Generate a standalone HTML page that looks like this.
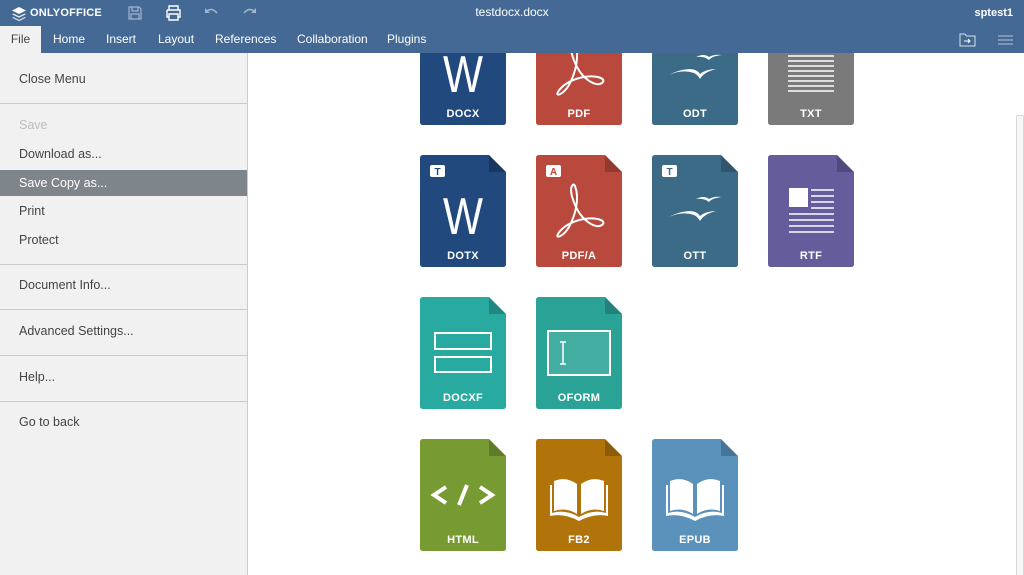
<!DOCTYPE html>
<html><head><meta charset="utf-8"><style>
*{margin:0;padding:0;box-sizing:border-box}
body{width:1024px;height:575px;overflow:hidden;font-family:"Liberation Sans",sans-serif;background:#fff;position:relative}
#hdr{position:absolute;left:0;top:0;width:1024px;height:53px;background:#446995;color:#fff}
.tab{position:absolute;top:26px;height:27px;line-height:26px;font-size:12px;color:#fff}
#menu{position:absolute;left:0;top:53px;width:248px;height:522px;background:#f1f1f1;border-right:1px solid #cbcbcb}
.mi{position:absolute;left:19px;font-size:12.5px;color:#444}
.dv{position:absolute;left:0;width:247px;height:1px;background:#cbcbcb}
#content{position:absolute;left:248px;top:53px;width:776px;height:522px;overflow:hidden}
.ic{position:absolute;width:86px;height:112px}
.ic svg{display:block}
.lb{font:bold 11px "Liberation Sans",sans-serif;fill:#fff;text-anchor:middle;letter-spacing:.3px}
</style></head><body>
<svg width="0" height="0" style="position:absolute">
<defs>
<path id="pg" d="M3,0H69L86,17V109Q86,112 83,112H3Q0,112 0,109V3Q0,0 3,0Z"/>
<path id="fd" d="M69,0L86,17H69Z"/>
<g id="book" fill="#fff"><path d="M18,42Q30,37 41,45V75Q30,68 18,72Z"/><path d="M68,42Q56,37 45,45V75Q56,68 68,72Z"/><path d="M14,46h2v28q13,-4 27,4q14,-8 27,-4v-28h2v31q-14,-3 -29,5q-15,-8 -29,-5Z"/></g>
<g id="birds" fill="#fff"><path d="M17,62Q30,56 42,60Q46,62 48,66Q52,59 64,56Q54,56 48,61Q44,54 30,57Q22,59 17,62Z"/><path d="M44,44Q52,43 57,47Q60,43 70,42Q62,41 57,44Q52,40 44,44Z"/></g>
<path id="acro" fill="none" stroke="#fff" stroke-width="2" d="M36,31C33,36 38,50 44,59C50,67 60,74 66,70C71,66 62,62 48,64C36,66 26,72 22,79C19,84 27,82 33,72C39,61 44,44 39,31C38,29 37,29 36,31Z"/>
</defs></svg>

<div id="hdr">
 <svg style="position:absolute;left:11px;top:6px" width="16" height="16" viewBox="0 0 16 16"><path d="M8,1L15,4.5L8,8L1,4.5Z" fill="#fff"/><path d="M2.5,7.5L8,10.3L13.5,7.5L15,8.3L8,11.8L1,8.3Z" fill="#fff" opacity=".85"/><path d="M2.5,11L8,13.8L13.5,11L15,11.8L8,15.3L1,11.8Z" fill="#fff" opacity=".7"/></svg>
 <div style="position:absolute;left:30px;top:7px;font-size:11px;font-weight:bold;letter-spacing:.2px">ONLYOFFICE</div>
 <svg style="position:absolute;left:128px;top:6px" width="14" height="14" viewBox="0 0 14 14" opacity=".5"><path d="M1,1H11L13,3V13H1Z M4,1V5H10V1 M3,8H11V13H3Z" fill="none" stroke="#fff" stroke-width="1.2"/></svg>
 <svg style="position:absolute;left:165px;top:5px" width="17" height="16" viewBox="0 0 17 16"><path d="M4,5V1H13V5 M2,5H15V12H13 M4,12H2V5 M4,9H13V15H4Z" fill="none" stroke="#fff" stroke-width="1.4"/></svg>
 <svg style="position:absolute;left:204px;top:7px" width="14" height="10" viewBox="0 0 14 10" opacity=".5"><path d="M3,4Q8,0 13,6" fill="none" stroke="#fff" stroke-width="1.5"/><path d="M1,1V6H6Z" fill="#fff"/></svg>
 <svg style="position:absolute;left:243px;top:7px" width="14" height="10" viewBox="0 0 14 10" opacity=".5"><path d="M11,4Q6,0 1,6" fill="none" stroke="#fff" stroke-width="1.5"/><path d="M13,1V6H8Z" fill="#fff"/></svg>
 <div style="position:absolute;left:0;width:1024px;top:5px;text-align:center;font-size:12px">testdocx.docx</div>
 <div style="position:absolute;right:11px;top:7px;font-size:11px;font-weight:bold">sptest1</div>
 <div class="tab" style="left:0;width:41px;background:#f1f1f1;color:#444;text-align:center">File</div>
 <div class="tab" style="left:53px">Home</div>
 <div class="tab" style="left:106px">Insert</div>
 <div class="tab" style="left:158px">Layout</div>
 <div class="tab" style="left:215px">References</div>
 <div class="tab" style="left:297px">Collaboration</div>
 <div class="tab" style="left:387px">Plugins</div>
 <svg style="position:absolute;left:959px;top:33px" width="17" height="14" viewBox="0 0 17 14"><path d="M1,1H6L7.5,3H16V13H1Z" fill="none" stroke="#fff" stroke-width="1" opacity=".8"/><path d="M5,8H11M9,6L11,8L9,10" fill="none" stroke="#fff" stroke-width="1"/></svg>
 <svg style="position:absolute;left:998px;top:35px" width="15" height="10" viewBox="0 0 15 10" opacity=".6"><path d="M0,1H15M0,5H15M0,9H15" stroke="#fff" stroke-width="1"/></svg>
</div>

<div id="menu">
 <div class="mi" style="top:19px">Close Menu</div>
 <div class="dv" style="top:50px"></div>
 <div class="mi" style="top:65px;color:#bdbdbd">Save</div>
 <div class="mi" style="top:94px">Download as...</div>
 <div style="position:absolute;left:0;top:117px;width:247px;height:26px;background:#7e858b"></div>
 <div class="mi" style="top:123px;color:#fff">Save Copy as...</div>
 <div class="mi" style="top:151px">Print</div>
 <div class="mi" style="top:180px">Protect</div>
 <div class="dv" style="top:211px"></div>
 <div class="mi" style="top:225px">Document Info...</div>
 <div class="dv" style="top:256px"></div>
 <div class="mi" style="top:271px">Advanced Settings...</div>
 <div class="dv" style="top:302px"></div>
 <div class="mi" style="top:317px">Help...</div>
 <div class="dv" style="top:348px"></div>
 <div class="mi" style="top:362px">Go to back</div>
</div>

<div id="content">
 <div class="ic" style="left:172px;top:-40px"><svg width="86" height="112"><use href="#pg" fill="#22497e"/><use href="#fd" fill="#000" opacity=".25"/><text x="23" y="79" font-size="52" fill="#fff" textLength="40" lengthAdjust="spacingAndGlyphs" font-family="Liberation Sans">W</text><text class="lb" x="43" y="104">DOCX</text></svg></div>
 <div class="ic" style="left:288px;top:-40px"><svg width="86" height="112"><use href="#pg" fill="#b8493c"/><use href="#fd" fill="#000" opacity=".2"/><use href="#acro"/><text class="lb" x="43" y="104">PDF</text></svg></div>
 <div class="ic" style="left:404px;top:-40px"><svg width="86" height="112"><use href="#pg" fill="#3c6b87"/><use href="#fd" fill="#000" opacity=".2"/><use href="#birds"/><text class="lb" x="43" y="104">ODT</text></svg></div>
 <div class="ic" style="left:520px;top:-40px"><svg width="86" height="112"><use href="#pg" fill="#7a7a7a"/><use href="#fd" fill="#000" opacity=".2"/><path d="M20,43H66M20,48H66M20,53H66M20,58H66M20,63H66M20,68H66M20,73H66M20,78H66" stroke="#fff" stroke-width="1.6"/><text class="lb" x="43" y="104">TXT</text></svg></div>
 <div class="ic" style="left:172px;top:102px"><svg width="86" height="112"><use href="#pg" fill="#22497e"/><use href="#fd" fill="#000" opacity=".25"/><rect x="10" y="10" width="15" height="12" rx="2" fill="#fff"/><text x="17.5" y="20" font-size="10" font-weight="bold" fill="#22497e" text-anchor="middle">T</text><text x="23" y="79" font-size="52" fill="#fff" textLength="40" lengthAdjust="spacingAndGlyphs" font-family="Liberation Sans">W</text><text class="lb" x="43" y="104">DOTX</text></svg></div>
 <div class="ic" style="left:288px;top:102px"><svg width="86" height="112"><use href="#pg" fill="#b8493c"/><use href="#fd" fill="#000" opacity=".2"/><rect x="10" y="10" width="15" height="12" rx="2" fill="#fff"/><text x="17.5" y="20" font-size="10" font-weight="bold" fill="#b8493c" text-anchor="middle">A</text><use href="#acro"/><text class="lb" x="43" y="104">PDF/A</text></svg></div>
 <div class="ic" style="left:404px;top:102px"><svg width="86" height="112"><use href="#pg" fill="#3c6b87"/><use href="#fd" fill="#000" opacity=".2"/><rect x="10" y="10" width="15" height="12" rx="2" fill="#fff"/><text x="17.5" y="20" font-size="10" font-weight="bold" fill="#3c6b87" text-anchor="middle">T</text><use href="#birds"/><text class="lb" x="43" y="104">OTT</text></svg></div>
 <div class="ic" style="left:520px;top:102px"><svg width="86" height="112"><use href="#pg" fill="#655c9c"/><use href="#fd" fill="#000" opacity=".2"/><rect x="21" y="33" width="19" height="19" fill="#fff"/><path d="M43,35H66M43,41H66M43,47H66M43,53H66M21,59H66M21,65H66M21,71H66M21,77H66" stroke="#fff" stroke-width="1.6"/><text class="lb" x="43" y="104">RTF</text></svg></div>
 <div class="ic" style="left:172px;top:244px"><svg width="86" height="112"><use href="#pg" fill="#28aaa1"/><use href="#fd" fill="#000" opacity=".2"/><rect x="15" y="36" width="56" height="16" fill="none" stroke="#fff" stroke-width="2"/><rect x="15" y="60" width="56" height="15" fill="none" stroke="#fff" stroke-width="2"/><text class="lb" x="43" y="104">DOCXF</text></svg></div>
 <div class="ic" style="left:288px;top:244px"><svg width="86" height="112"><use href="#pg" fill="#2ba296"/><use href="#fd" fill="#000" opacity=".2"/><rect x="12" y="34" width="62" height="44" fill="#fff" fill-opacity=".12" stroke="#fff" stroke-width="2"/><path d="M24,45H30M27,45V67M24,67H30" stroke="#fff" stroke-width="1.5" fill="none"/><text class="lb" x="43" y="104">OFORM</text></svg></div>
 <div class="ic" style="left:172px;top:386px"><svg width="86" height="112"><use href="#pg" fill="#789a33"/><use href="#fd" fill="#000" opacity=".2"/><path d="M26,48L14,56L26,64M47,46L39,66M60,48L72,56L60,64" fill="none" stroke="#fff" stroke-width="4"/><text class="lb" x="43" y="104">HTML</text></svg></div>
 <div class="ic" style="left:288px;top:386px"><svg width="86" height="112"><use href="#pg" fill="#b0740b"/><use href="#fd" fill="#000" opacity=".2"/><use href="#book"/><text class="lb" x="43" y="104">FB2</text></svg></div>
 <div class="ic" style="left:404px;top:386px"><svg width="86" height="112"><use href="#pg" fill="#5a92bb"/><use href="#fd" fill="#000" opacity=".2"/><use href="#book"/><text class="lb" x="43" y="104">EPUB</text></svg></div>
 <div style="position:absolute;left:768px;top:62px;width:8px;height:470px;border:1px solid #d8d8d8;border-radius:2px;background:#f7f7f7"></div>
</div>
</body></html>
